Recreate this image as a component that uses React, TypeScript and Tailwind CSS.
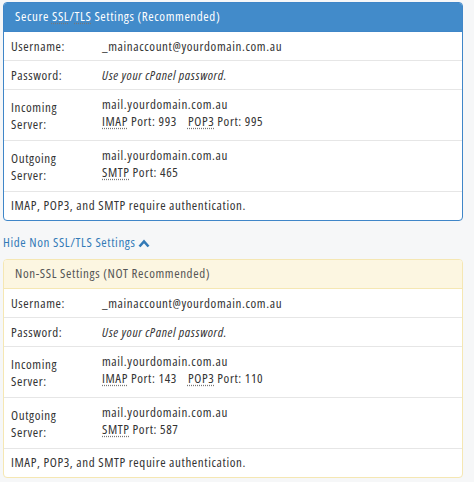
import React from "react";

const Abbr = ({ children }: { children: React.ReactNode }) => (
  <span className="underline decoration-dotted decoration-[#777] underline-offset-2">{children}</span>
);

type Variant = "blue" | "yellow";

function Row({ label, children, tall = false }: { label: React.ReactNode; children: React.ReactNode; tall?: boolean }) {
  return (
    <div className={`flex border-b border-[#e6e6e6] ${tall ? "h-[51px]" : "h-[29px]"}`}>
      <div className="w-[98px] shrink-0 pl-[7px] flex items-center leading-[17px]">{label}</div>
      <div className={`flex-1 leading-[17px] ${tall ? "pt-[6px]" : "flex items-center"}`}>{children}</div>
    </div>
  );
}

function Panel({ variant, title, imap, pop3, smtp }: { variant: Variant; title: React.ReactNode; imap: string; pop3: string; smtp: string }) {
  const blue = variant === "blue";
  return (
    <div className={`mx-[3px] rounded-[4px] border bg-white overflow-hidden ${blue ? "border-[#3f86c8]" : "border-[#f5e7b3]"}`}>
      <div className={`h-[29px] flex items-center pl-[11px] border-b ${blue ? "bg-[#428bca] text-white border-[#3f86c8]" : "bg-[#fcf6e1] text-[#555] border-[#f5e7b3]"}`}>
        {title}
      </div>
      <Row label="Username:">_mainaccount@yourdomain.com.au</Row>
      <Row label="Password:">
        <span className="italic">Use your cPanel password.</span>
      </Row>
      <Row label={<span className="pt-[2px]">Incoming<br />Server:</span>} tall>
        <div>mail.yourdomain.com.au</div>
        <div>
          <Abbr>IMAP</Abbr> Port: {imap}
          <span className="ml-[11px]"><Abbr>POP3</Abbr> Port: {pop3}</span>
        </div>
      </Row>
      <Row label={<span className="pt-[2px]">Outgoing<br />Server:</span>} tall>
        <div>mail.yourdomain.com.au</div>
        <div>
          <Abbr>SMTP</Abbr> Port: {smtp}
        </div>
      </Row>
      <div className="h-[28px] flex items-center pl-[7px]">IMAP, POP3, and SMTP require authentication.</div>
    </div>
  );
}

export default function App() {
  return (
    <div
      className="w-[474px] h-[482px] bg-[#f6f7f8] pt-[2px] text-[13px] tracking-[0.6px] text-[#333] font-stretch-condensed"
      style={{ fontFamily: '"Open Sans", "Noto Sans", sans-serif' }}
    >
      <div className="w-[466px]">
        <Panel
          variant="blue"
          title={
            <span>
              Secure <Abbr>SSL</Abbr>/<Abbr>TLS</Abbr> Settings (Recommended)
            </span>
          }
          imap="993"
          pop3="995"
          smtp="465"
        />
        <div className="h-[38px] flex items-center pl-[3px] pt-[6px] text-[#337ab7]">
          Hide Non SSL/TLS Settings
          <svg width="12" height="9" viewBox="0 0 12 9" className="ml-[3px]">
            <path d="M1.5 7.5 L6 2.5 L10.5 7.5" fill="none" stroke="#337ab7" strokeWidth="2.6" />
          </svg>
        </div>
        <Panel variant="yellow" title="Non-SSL Settings (NOT Recommended)" imap="143" pop3="110" smtp="587" />
      </div>
    </div>
  );
}
